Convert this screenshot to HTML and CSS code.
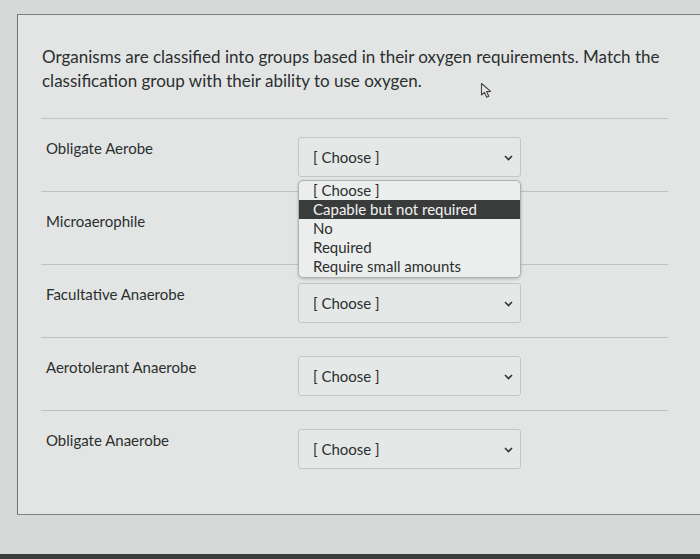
FILE: index.html
```html
<!DOCTYPE html>
<html>
<head>
    <title>Matching Question</title>
    <link rel="stylesheet" href="styles.css">
</head>
<body>
    <div class="card">
        <div class="question">
            <p>Organisms are classified into groups based in their oxygen requirements. Match the classification group with their ability to use oxygen.</p>
            <!-- mouse pointer left on screen -->
            <svg class="cursor" width="14" height="17" viewBox="0 0 14 17">
                <path d="M1.5 1.5 L1.5 13 L4.4 10.4 L6.7 15.2 L8.8 14.2 L6.6 9.6 L10.6 9.4 Z" fill="#e6e8e7" stroke="#444" stroke-width="1.1" stroke-linejoin="round"/>
            </svg>
        </div>

        <div class="row">
            <div class="label">Obligate Aerobe</div>
            <div class="select-wrap">
                <div class="select">
                    <span>[ Choose ]</span>
                    <svg class="chevron" width="9" height="6" viewBox="0 0 9 6"><path d="M1 1 L4.5 4.5 L8 1" fill="none" stroke="#333" stroke-width="1.6"/></svg>
                </div>
                <ul class="options">
                    <li>[ Choose ]</li>
                    <li class="active">Capable but not required</li>
                    <li>No</li>
                    <li>Required</li>
                    <li>Require small amounts</li>
                </ul>
            </div>
        </div>

        <div class="row">
            <div class="label">Microaerophile</div>
            <div class="select-wrap">
                <!-- covered by the open list above -->
                <div class="select"></div>
            </div>
        </div>

        <div class="row">
            <div class="label">Facultative Anaerobe</div>
            <div class="select-wrap">
                <div class="select">
                    <span>[ Choose ]</span>
                    <svg class="chevron" width="9" height="6" viewBox="0 0 9 6"><path d="M1 1 L4.5 4.5 L8 1" fill="none" stroke="#333" stroke-width="1.6"/></svg>
                </div>
            </div>
        </div>

        <div class="row">
            <div class="label">Aerotolerant Anaerobe</div>
            <div class="select-wrap">
                <div class="select">
                    <span>[ Choose ]</span>
                    <svg class="chevron" width="9" height="6" viewBox="0 0 9 6"><path d="M1 1 L4.5 4.5 L8 1" fill="none" stroke="#333" stroke-width="1.6"/></svg>
                </div>
            </div>
        </div>

        <div class="row last">
            <div class="label">Obligate Anaerobe</div>
            <div class="select-wrap">
                <div class="select">
                    <span>[ Choose ]</span>
                    <svg class="chevron" width="9" height="6" viewBox="0 0 9 6"><path d="M1 1 L4.5 4.5 L8 1" fill="none" stroke="#333" stroke-width="1.6"/></svg>
                </div>
            </div>
        </div>
    </div>
    <div class="bezel"></div>
</body>
</html>
```

FILE: styles.css
```css
body {
    margin: 0;
    height: 559px;
    overflow: hidden;
    font-family: Lato, "Open Sans", sans-serif;
    color: #2b2f2f;
    background: #d6d9d8;
    display: flex;
    flex-direction: column;
}

/* the quiz question box, running off the right edge */
.card {
    margin: 14px 0 0 17px;
    height: 501px;
    box-sizing: border-box;
    background: #e2e5e4;
    border-top: 1px solid #7d8180;
    border-left: 1px solid #6f7372;
    border-bottom: 1px solid #7f8382;
    padding: 0 32px 0 23px;
}

.question {
    position: relative;
    padding: 30px 0 25px 1px;
    border-bottom: 1px solid #bfc3c2;
}

.question p {
    margin: 0;
    font-size: 17px;
    line-height: 24px;
    max-width: 630px;
}

.cursor {
    position: absolute;
    left: 439px;
    top: 67px;
}

.row {
    display: flex;
    align-items: flex-start;
    padding: 18px 0 14px;
    border-bottom: 1px solid #bdc1c0;
}

.row.last {
    border-bottom: none;
}

.label {
    width: 257px;
    padding: 1px 0 0 5px;
    box-sizing: border-box;
    font-size: 15px;
    line-height: 20px;
}

.select-wrap {
    position: relative;
}

.select {
    width: 223px;
    height: 40px;
    box-sizing: border-box;
    border: 1px solid #c2c6c5;
    border-radius: 3px;
    background: #e5e8e7;
    display: flex;
    align-items: center;
    justify-content: space-between;
    padding: 0 7px 0 14px;
    font-size: 15px;
}

.chevron {
    margin-top: 2px;
}

/* opened dropdown of the first select */
.options {
    position: absolute;
    top: 43px;
    left: 0;
    width: 223px;
    box-sizing: border-box;
    margin: 0;
    padding: 0 0 1px;
    list-style: none;
    background: #eceeed;
    border: 1px solid #aeb2b1;
    border-radius: 5px;
    box-shadow: 0 1px 3px rgba(0, 0, 0, 0.2);
    font-size: 15px;
    z-index: 2;
}

.options li {
    height: 19px;
    line-height: 19px;
    padding-left: 14px;
}

.options li.active {
    background: #3a3c3c;
    color: #f2f2f2;
}

.bezel {
    margin-top: auto;
    height: 5px;
    background: #3a3c3d;
}
```
